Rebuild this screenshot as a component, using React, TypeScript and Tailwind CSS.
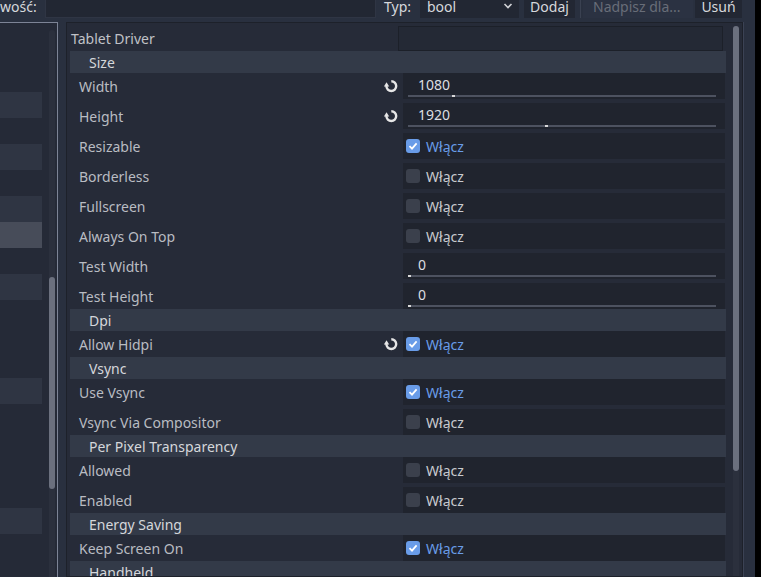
import React from "react";

type Row =
  | { kind: "head"; name: string }
  | { kind: "num"; name: string; value: string; tick: number; revert?: boolean }
  | { kind: "bool"; name: string; on: boolean; revert?: boolean };

const rows: Row[] = [
  { kind: "head", name: "Size" },
  { kind: "num", name: "Width", value: "1080", tick: 44, revert: true },
  { kind: "num", name: "Height", value: "1920", tick: 137, revert: true },
  { kind: "bool", name: "Resizable", on: true },
  { kind: "bool", name: "Borderless", on: false },
  { kind: "bool", name: "Fullscreen", on: false },
  { kind: "bool", name: "Always On Top", on: false },
  { kind: "num", name: "Test Width", value: "0", tick: 0 },
  { kind: "num", name: "Test Height", value: "0", tick: 0 },
  { kind: "head", name: "Dpi" },
  { kind: "bool", name: "Allow Hidpi", on: true, revert: true },
  { kind: "head", name: "Vsync" },
  { kind: "bool", name: "Use Vsync", on: true },
  { kind: "bool", name: "Vsync Via Compositor", on: false },
  { kind: "head", name: "Per Pixel Transparency" },
  { kind: "bool", name: "Allowed", on: false },
  { kind: "bool", name: "Enabled", on: false },
  { kind: "head", name: "Energy Saving" },
  { kind: "bool", name: "Keep Screen On", on: true },
  { kind: "head", name: "Handheld" },
];

// left tree: 26px rows, which ones carry a background
const treeRows = [
  "", "", "bg", "", "bg", "", "bg", "sel", "", "bg", "", "", "", "bg",
  "", "", "", "", "bg", "", "",
];

function Revert() {
  return (
    <svg width="14" height="14" viewBox="0 0 14 14">
      <path d="M7.3 2.2 A4.9 4.9 0 1 1 2.4 7.1" fill="none" stroke="#e6e6e6" strokeWidth="2.4" />
      <path d="M-0.2 7.6 L5.2 7.6 L2.5 3.2 Z" fill="#e6e6e6" />
    </svg>
  );
}

function Check({ on }: { on: boolean }) {
  if (!on) return <div className="w-[14px] h-[14px] rounded-[3px] bg-[#3b404c]" />;
  return (
    <div className="w-[14px] h-[14px] rounded-[3px] bg-[#699ce8] flex items-center justify-center">
      <svg width="10" height="10" viewBox="0 0 10 10">
        <path d="M1.5 5.2 L4 7.6 L8.6 2.4" fill="none" stroke="#ffffff" strokeWidth="1.8" />
      </svg>
    </div>
  );
}

export default function App() {
  return (
    <div
      className="w-[761px] h-[577px] bg-black flex overflow-hidden text-[14px]"
      style={{ fontFamily: '"Noto Sans", "DejaVu Sans", sans-serif' }}
    >
      <div className="w-[755px] h-full bg-[#29303f] flex flex-col">
        {/* top bar, cut off at the top of the screenshot */}
        <div className="h-[18px] flex items-end overflow-hidden text-[#d6d8dc]">
          <div className="w-[45px] h-[24px] flex items-center">wość:</div>
          <div className="w-[331px] h-[24px] bg-[#222733] border border-[#2f3544]" />
          <div className="w-[36px] h-[24px] ml-[8px] flex items-center">Typ:</div>
          <div className="w-[99px] h-[24px] bg-[#222733] flex items-center pl-[7px] pr-[6px]">
            <span className="flex-1">bool</span>
            <svg width="10" height="8" viewBox="0 0 10 8">
              <path d="M1.5 2 L5 5.5 L8.5 2" fill="none" stroke="#d0d2d6" strokeWidth="1.6" />
            </svg>
          </div>
          <div className="w-[51px] h-[24px] ml-[5px] bg-[#222733] flex items-center justify-center">Dodaj</div>
          <div className="w-[1px] h-[24px] ml-[5px] bg-[#3a4151]" />
          <div className="w-[110px] h-[24px] ml-[2px] bg-[#2b3242] flex items-center pl-[10px] text-[#686d78]">
            Nadpisz dla...
          </div>
          <div className="w-[47px] h-[24px] ml-[2px] bg-[#222733] flex items-center justify-center">Usuń</div>
        </div>

        <div className="flex-1 flex mt-[4px] min-h-0">
          {/* left tree */}
          <div className="w-[58px] h-full bg-[#252a37] border-t border-r border-[#7d8496] flex overflow-hidden">
            <div className="w-[42px] pt-[17px] flex flex-col">
              {treeRows.map((r, i) => (
                <div
                  key={i}
                  className={
                    "h-[26px] shrink-0 " +
                    (r === "sel" ? "bg-[#474c59]" : r === "bg" ? "bg-[#2f3543]" : "")
                  }
                />
              ))}
            </div>
            <div className="w-[6px] ml-[7px] mt-[7px] h-full bg-[#2b303d] rounded-[3px] flex flex-col">
              <div className="h-[247px] shrink-0" />
              <div className="h-[212px] shrink-0 bg-[#6b707e] rounded-[3px]" />
            </div>
          </div>

          {/* inspector */}
          <div className="w-[677px] h-full ml-[8px] bg-[#262b38] border border-[#1d212a] flex overflow-hidden">
            <div className="w-[659px] pl-[3px] pt-[2px] flex flex-col shrink-0">
              <div className="h-[26px] shrink-0 flex items-center text-[#c0c2c7]">
                <span className="flex-1 pl-[1px]">Tablet Driver</span>
                <div className="w-[325px] h-[25px] mr-[3px] bg-[#242935] border border-[#1c2029]" />
              </div>
              {rows.map((r, i) => {
                const prev = rows[i - 1];
                const gap = r.kind !== "head" && prev && prev.kind !== "head";
                if (r.kind === "head") {
                  return (
                    <div
                      key={i}
                      className="h-[22px] shrink-0 bg-[#333a48] flex items-center pl-[19px] text-[#d5d7db]"
                    >
                      {r.name}
                    </div>
                  );
                }
                return (
                  <div key={i} className={"h-[26px] shrink-0 flex " + (gap ? "mt-[4px]" : "")}>
                    <div className="flex-1 flex items-center pl-[9px] text-[#b9bcc2]">
                      <span className="flex-1">{r.name}</span>
                      <div className="w-[14px] mr-[5px] flex items-center">{r.revert ? <Revert /> : null}</div>
                    </div>
                    <div className="w-[322px] mr-[1px] bg-[#20242e] flex flex-col">
                      {r.kind === "num" ? (
                        <>
                          <div className="h-[22px] flex items-center pl-[15px] text-[#dcdee2]">{r.value}</div>
                          <div className="ml-[5px] w-[308px] h-[2px] bg-[#4d5260] flex">
                            <div className="shrink-0" style={{ width: r.tick }} />
                            <div className="w-[3px] h-[2px] bg-[#d8d8d8]" />
                          </div>
                        </>
                      ) : (
                        <div className="h-full flex items-center pl-[3px] gap-[6px]">
                          <Check on={r.on} />
                          <span className={r.on ? "text-[#699ce8]" : "text-[#c8cacf]"}>Włącz</span>
                        </div>
                      )}
                    </div>
                  </div>
                );
              })}
            </div>
            <div className="w-[6px] ml-[7px] mt-[3px] flex flex-col">
              <div className="h-[445px] shrink-0 bg-[#6b707e] rounded-[3px]" />
              <div className="flex-1 bg-[#2b303d]" />
            </div>
          </div>
          <div className="w-[1px] h-full bg-[#3b4254]" />
        </div>
      </div>
    </div>
  );
}
